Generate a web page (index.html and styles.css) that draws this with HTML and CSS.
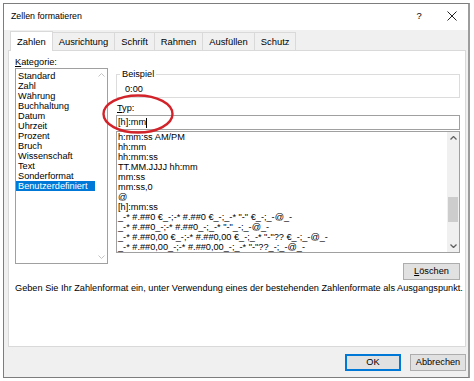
FILE: index.html
```html
<!DOCTYPE html>
<html lang="de">
<head>
    <meta charset="UTF-8">
    <title>Zellen formatieren</title>
    <link rel="stylesheet" href="styles.css">
</head>
<body>
    <div class="dialog">
        <div class="titlebar">
            <span class="title">Zellen formatieren</span>
            <span class="help">?</span>
            <span class="close">
                <svg width="10" height="10" viewBox="0 0 10 10"><path d="M0.5 0.5L9.5 9.5M9.5 0.5L0.5 9.5" stroke="#222" stroke-width="1" fill="none"/></svg>
            </span>
        </div>

        <div class="content">
            <div class="tabs">
                <div class="tab active">Zahlen</div>
                <div class="tab">Ausrichtung</div>
                <div class="tab">Schrift</div>
                <div class="tab">Rahmen</div>
                <div class="tab">Ausfüllen</div>
                <div class="tab">Schutz</div>
            </div>

            <div class="panel">
                <div class="columns">
                    <div class="col-left">
                        <div class="label"><u>K</u>ategorie:</div>
                        <div class="listbox categories">
                            <ul class="items">
                                <li>Standard</li>
                                <li>Zahl</li>
                                <li>Währung</li>
                                <li>Buchhaltung</li>
                                <li>Datum</li>
                                <li>Uhrzeit</li>
                                <li>Prozent</li>
                                <li>Bruch</li>
                                <li>Wissenschaft</li>
                                <li>Text</li>
                                <li>Sonderformat</li>
                                <li class="selected">Benutzerdefiniert</li>
                            </ul>
                            <div class="scrollbar disabled">
                                <div class="arrow"><svg width="7" height="4" viewBox="0 0 7 4"><path d="M0.5 3.5L3.5 0.5L6.5 3.5" fill="none" stroke="currentColor"/></svg></div>
                                <div class="track"></div>
                                <div class="arrow"><svg width="7" height="4" viewBox="0 0 7 4"><path d="M0.5 0.5L3.5 3.5L6.5 0.5" fill="none" stroke="currentColor"/></svg></div>
                            </div>
                        </div>
                    </div>

                    <div class="col-right">
                        <fieldset class="sample">
                            <legend>Beispiel</legend>
                            <div>0:00</div>
                        </fieldset>

                        <div class="label typ"><u>T</u>yp:</div>
                        <div class="input">[h]:mm<span class="caret"></span></div>

                        <div class="listbox formats">
                            <ul class="items">
                                <li>h:mm:ss AM/PM</li>
                                <li>hh:mm</li>
                                <li>hh:mm:ss</li>
                                <li>TT.MM.JJJJ hh:mm</li>
                                <li>mm:ss</li>
                                <li>mm:ss,0</li>
                                <li>@</li>
                                <li>[h]:mm:ss</li>
                                <li>_-* #.##0 €_-;-* #.##0 €_-;_-* "-" €_-;_-@_-</li>
                                <li>_-* #.##0_-;-* #.##0_-;_-* "-"_-;_-@_-</li>
                                <li>_-* #.##0,00 €_-;-* #.##0,00 €_-;_-* "-"?? €_-;_-@_-</li>
                                <li>_-* #.##0,00_-;-* #.##0,00_-;_-* "-"??_-;_-@_-</li>
                            </ul>
                            <div class="scrollbar">
                                <div class="arrow"><svg width="7" height="4" viewBox="0 0 7 4"><path d="M0.5 3.5L3.5 0.5L6.5 3.5" fill="none" stroke="currentColor" stroke-width="1.3"/></svg></div>
                                <div class="track"><div class="thumb"></div></div>
                                <div class="arrow"><svg width="7" height="4" viewBox="0 0 7 4"><path d="M0.5 0.5L3.5 3.5L6.5 0.5" fill="none" stroke="currentColor" stroke-width="1.3"/></svg></div>
                            </div>
                        </div>

                        <div class="row-right">
                            <button class="btn delete"><u>L</u>öschen</button>
                        </div>
                    </div>
                </div>

                <p class="hint">Geben Sie Ihr Zahlenformat ein, unter Verwendung eines der bestehenden Zahlenformate als Ausgangspunkt.</p>

                <svg class="mark" width="74" height="42" viewBox="0 0 74 42">
                    <ellipse cx="37" cy="21" rx="34.5" ry="18.5" fill="none" stroke="#d3232a" stroke-width="2.4"/>
                </svg>
            </div>

            <div class="footer">
                <button class="btn default">OK</button>
                <button class="btn">Abbrechen</button>
            </div>
        </div>
    </div>
</body>
</html>
```

FILE: styles.css
```css
body {
    margin: 0;
    background-color: #ffffff;
    font-family: "Liberation Sans", Arial, sans-serif;
    font-size: 9.2px;
    color: #000000;
}

.dialog {
    margin: 3px 0 0 3px;
    width: 467px;
    height: 375px;
    box-sizing: border-box;
    border: 1px solid #7d7d7d;
    border-right: 2px solid #9c9c9c;
    display: flex;
    flex-direction: column;
    background-color: #f0f0f0;
}

/* title bar */
.titlebar {
    height: 26px;
    flex: none;
    box-sizing: border-box;
    background-color: #ffffff;
    display: flex;
    align-items: flex-start;
    padding: 6px 4px 0 7px;
    line-height: 12px;
    font-size: 8.8px;
}

.title {
    flex: 1;
}

.help {
    width: 20px;
    text-align: center;
    margin-right: 11px;
    font-size: 9.4px;
}

.close {
    width: 24px;
    display: flex;
    justify-content: center;
    padding-top: 1px;
}

/* tabs + panel */
.content {
    flex: 1;
    padding: 2px 2px 0 4px;
    display: flex;
    flex-direction: column;
}

.tabs {
    height: 18px;
    display: flex;
    align-items: flex-end;
    padding-left: 2px;
    position: relative;
    z-index: 1;
    font-size: 9.4px;
}

.tab {
    height: 18px;
    box-sizing: border-box;
    padding: 0 6px;
    margin-right: -1px;
    border: 1px solid #d9d9d9;
    border-bottom: none;
    line-height: 18px;
    background-color: #f0f0f0;
}

.tab.active {
    height: 20px;
    margin-bottom: -1px;
    background-color: #ffffff;
    line-height: 20px;
}

.panel {
    height: 297px;
    box-sizing: border-box;
    border: 1px solid #d9d9d9;
    background-color: #ffffff;
    padding: 5px 5px 0 6px;
    position: relative;
}

.columns {
    display: flex;
    align-items: flex-start;
    gap: 8px;
}

.col-left {
    width: 93px;
}

.col-right {
    width: 344px;
    padding-top: 12px;
}

.label {
    line-height: 12px;
}

/* list boxes */
.listbox {
    display: flex;
    box-sizing: border-box;
    border: 1px solid #a0a0a0;
    background-color: #ffffff;
    overflow: hidden;
}

.items {
    list-style: none;
    margin: 0;
    padding: 0;
    flex: 1;
    line-height: 10px;
    white-space: nowrap;
    overflow: hidden;
}

.categories {
    height: 196px;
}

.categories .items {
    padding-top: 2px;
}

.categories li {
    padding-left: 2px;
    margin-right: 1px;
}

.categories li.selected {
    background-color: #0078d7;
    color: #ffffff;
}

.formats {
    height: 122px;
    margin-top: 1px;
}

.formats li {
    padding-left: 1px;
}

.scrollbar {
    width: 12px;
    display: flex;
    flex-direction: column;
    background-color: #f0f0f0;
    color: #606060;
}

.scrollbar.disabled {
    width: 11px;
    background-color: #ffffff;
    color: #c4c4c4;
}

.scrollbar .arrow {
    height: 12px;
    display: flex;
    align-items: center;
    justify-content: center;
}

.scrollbar .track {
    flex: 1;
}

.thumb {
    margin: 53px 1px 0 1px;
    height: 25px;
    background-color: #cdcdcd;
}

/* sample group */
.sample {
    margin: 0;
    padding: 3px 0 2px 8px;
    border: 1px solid #dcdcdc;
    min-width: 0;
    line-height: 12px;
}

.sample legend {
    padding: 0 2px;
    margin-left: -5px;
    line-height: 12px;
}

.typ {
    margin: 4px 0 0 1px;
}

.input {
    margin-top: 1px;
    height: 15px;
    box-sizing: border-box;
    border: 1px solid #a0a0a0;
    padding-left: 1px;
    line-height: 13px;
    display: flex;
    align-items: center;
}

.caret {
    width: 1px;
    height: 10px;
    background-color: #000000;
}

/* buttons */
.btn {
    font-family: inherit;
    font-size: 9.2px;
    color: #000000;
    height: 17px;
    width: 56px;
    padding: 0;
    box-sizing: border-box;
    border: 1px solid #adadad;
    background-color: #e1e1e1;
    line-height: 15px;
}

.btn.default {
    border-color: #0078d7;
    box-shadow: inset 0 0 0 1px #0078d7;
}

.row-right {
    display: flex;
    justify-content: flex-end;
    margin-top: 10px;
}

.delete {
    width: 57px;
}

.hint {
    margin: 2px 0 0 0;
    line-height: 12px;
    white-space: nowrap;
}

.mark {
    position: absolute;
    left: 92px;
    top: 42px;
}

.footer {
    display: flex;
    justify-content: flex-end;
    gap: 9px;
    margin-top: 7px;
}
```
